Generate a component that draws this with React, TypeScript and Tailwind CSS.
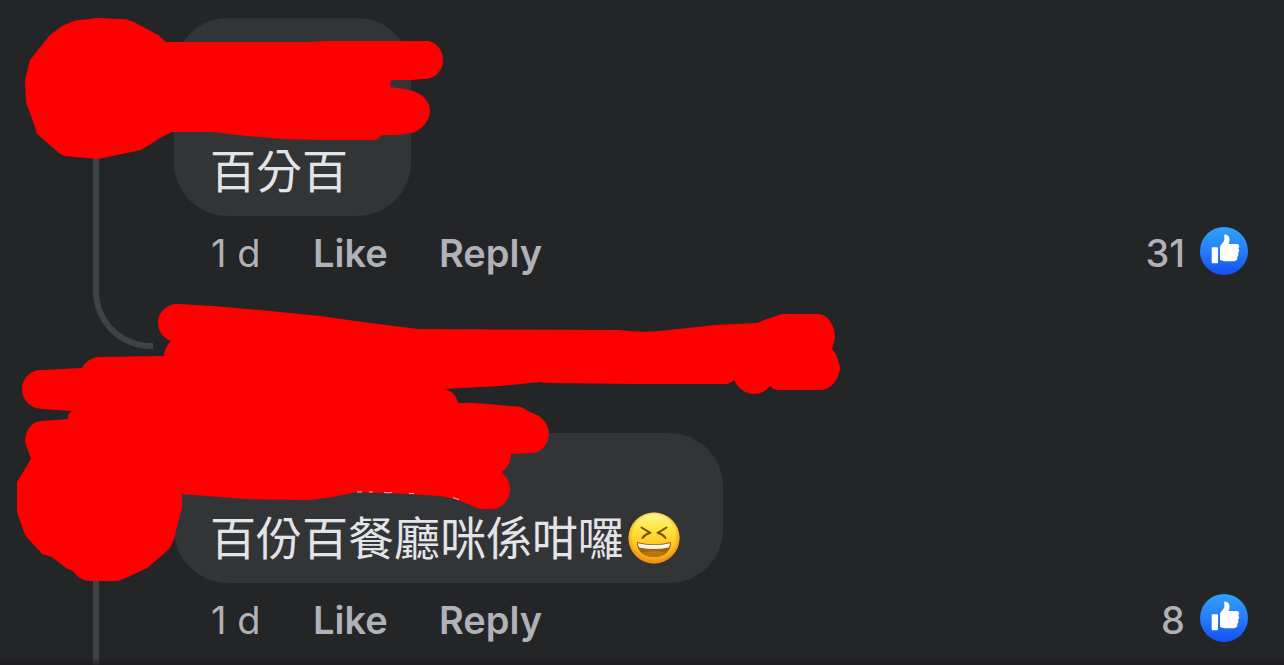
import { useState } from "react";
import type { ReactNode } from "react";

function LikeBadge() {
  return (
    <svg viewBox="0 0 48 48" className="mb-1 size-12" aria-hidden="true">
      <defs>
        <linearGradient id="likeFill" x1="0" y1="0" x2="0" y2="1">
          <stop offset="0" stopColor="#30a2fc" />
          <stop offset="0.5" stopColor="#267dfa" />
          <stop offset="1" stopColor="#1650ef" />
        </linearGradient>
      </defs>
      <circle cx="24" cy="24" r="24" fill="url(#likeFill)" />
      <path
        fill="#fff"
        d="M12.4 20.2h4.8c.5 0 .8.3.8.8v14.4c0 .5-.3.8-.8.8h-4.8c-.4 0-.7-.3-.7-.8V21c0-.5.3-.8.7-.8z"
      />
      <path
        fill="#fff"
        d="M24.200 8.400c-.1-.7.3-1 .9-1 2.800.1 4.400 2.100 4.400 5.200 0 1.700-.3 3.200-.8 4.300h8.100c1.500 0 2.400 1 2.400 2.300 0 1-.4 1.700-1 2.200.6.5.9 1.200.9 2 0 1.100-.5 2-1.200 2.400.4.5.5 1 .5 1.600 0 1.200-.5 2-1.300 2.400.2.4.3.8.3 1.300 0 1.800-1.400 3.100-3.400 3.100H25.200c-2.200 0-3.800-.5-4.600-1.100-.4-.3-.6-.7-.6-1.200V20.800c0-1.400.6-2.300 1.700-3.700 1.500-2 2.700-3.500 2.700-5.200 0-1.200-.1-2.300-.2-3.500z"
      />
    </svg>
  );
}

function LaughingFace() {
  return (
    <svg
      viewBox="0 0 52 52"
      className="mx-1 size-[52px]"
      role="img"
      aria-label="laughing"
    >
      <defs>
        <linearGradient id="faceFill" x1="0" y1="0" x2="0" y2="1">
          <stop offset="0" stopColor="#fff79c" />
          <stop offset="0.3" stopColor="#ffe641" />
          <stop offset="0.7" stopColor="#fdc321" />
          <stop offset="1" stopColor="#f39a12" />
        </linearGradient>
        <radialGradient id="faceEdge" cx="0.5" cy="0.47" r="0.54">
          <stop offset="0.76" stopColor="#f39a12" stopOpacity="0" />
          <stop offset="1" stopColor="#e88208" stopOpacity="0.9" />
        </radialGradient>
      </defs>
      <circle cx="26" cy="26" r="25.500" fill="url(#faceFill)" />
      <circle cx="26" cy="26" r="25.500" fill="url(#faceEdge)" />
      <g
        fill="none"
        stroke="#7d4a05"
        strokeWidth="2"
        strokeLinecap="round"
        strokeLinejoin="round"
      >
        <path d="M13.500 15.500Q18 18.500 22.500 20.800Q17.500 22 14.500 26" />
        <path d="M38.500 15.500Q34 18.500 29.500 20.800Q34.500 22 37.500 26" />
      </g>
      <path
        fill="#a0620b"
        d="M9 30Q26 34.500 43 30C43.500 39 36 45 26 45S8.500 39 9 30z"
      />
      <path
        fill="#b9740f"
        d="M14.500 40.500Q26 37.500 37.500 40.500Q33 45 26 45T14.500 40.500z"
      />
      <path
        fill="#f5f5f3"
        d="M10 31.200Q26 35 42 31.200C42 33 41.500 34.500 40.500 35.500Q26 38.500 11.500 35.500C10.500 34.500 10 33 10 31.200z"
      />
    </svg>
  );
}

// marker strokes that cover the names and avatars
function Redactions() {
  return (
    <svg
      width="860"
      height="600"
      viewBox="0 0 860 600"
      className="pointer-events-none absolute top-0 left-0"
      aria-hidden="true"
    >
      <path
        fill="#ff0000"
        d="M50 35L62 26 75 20.500 100 18 127 19.500 134 22 158 35 166 42 310 42 325 41 428 41C436 42 443 50 443 60C443 71 435 79 424 79L411 80 391 80 390 87 397 88C414 89 430 96 430 111C430 122 419 132 411 133L398 135 382 135C379 138 376 140 372 140L325 140 283 139 237 135 212 132 172 132 160 138 141 150 98 159 64 156 59 153 37 134 34 124 26 102 25 80 30 60z"
      />
      <path
        fill="#ff0000"
        d="M178 304L213 306 260 310 320 316 370 323 418 329 620 330C634 332 646 332 660 331L715 325 757 323 764 320 782 314 817 314C828 314 835 325 835 338L832 349 836 354C838 360 840 366 840 369C838 383 828 390 820 390L780 390C776 390 773 389 770 386C765 392 759 394 755 394C745 394 738 388 734 380C731 383 728 384 725 384L640 384 546 383 540 382 500 386 444 389C452 391 456 395 458 403L475 403 521 407 530 412C543 416 549 425 549 434C548 445 541 453 532 453L511 454C511 462 506 470 501 472C506 476 510 482 510 490C509 501 501 509 492 509L480 509 455 499 440 496 390 493 357 492 333 497 309 500 245 499 182 494 182 508 176 530C174 545 168 551 160 557L147 568 128 577 118 581 90 581C83 581 77 577 73 571L66 568 52 557 42 554 25 535 17 512 17 482 31 459 25 442C25 430 32 421 42 421L68 419C68 416 69 412 72 411L42 409C28 408 22 398 22 389C22 378 31 370 41 370L82 368C85 362 92 357 99 357L164 356C164 350 167 345 171 341C163 338 158 331 158 323C158 312 167 304 178 304z"
      />
      <path
        fill="none"
        stroke="#d9b4b8"
        d="M357 492h5M369 492h4M384 492.500q4 .8 8 0M409 493.500h5M453 497.500q3 1.500 6 2"
      />
    </svg>
  );
}

function CommentActions({ age, likes }: { age: string; likes: number }) {
  const [liked, setLiked] = useState(false);

  return (
    <div className="flex h-[74px] items-center pr-9 pl-[37px] text-[38px] text-[#b0b1b9]">
      <span className="w-[102px]">{age}</span>
      <button
        type="button"
        aria-pressed={liked}
        onClick={() => setLiked(!liked)}
        className="w-[126px] text-left font-semibold"
      >
        Like
      </button>
      <button type="button" className="font-semibold">
        Reply
      </button>
      <div className="ml-auto flex items-center gap-[15px]">
        <span className="font-medium">{likes}</span>
        <LikeBadge />
      </div>
    </div>
  );
}

function Bubble({ size, children }: { size: string; children: ReactNode }) {
  return (
    <div
      className={`flex w-fit items-end rounded-[54px] bg-[#333436] pr-[39px] pb-[15px] pl-9 ${size}`}
    >
      <p className="flex h-[60px] items-center text-[46px] leading-[60px] text-[#e3e4ea]">
        {children}
      </p>
    </div>
  );
}

function App() {
  return (
    <main className="relative flex min-h-screen flex-col bg-[#242527] pt-[18px] font-[Inter,'Noto_Sans_CJK_TC',sans-serif]">
      <article className="mb-[84px] flex">
        <div className="flex w-[174px] shrink-0 pl-[93px]">
          <div className="w-[60px] rounded-bl-[58px] border-b-6 border-l-6 border-[#414244]" />
        </div>
        <div className="flex-1 pb-[59px]">
          <Bubble size="min-h-[198px] min-w-[237px]">百分百</Bubble>
          <CommentActions age="1 d" likes={31} />
        </div>
      </article>

      <article className="flex flex-1">
        <div className="flex w-[174px] shrink-0 pl-[93px]">
          <div className="w-[6px] bg-[#414244]" />
        </div>
        <div className="flex-1">
          <Bubble size="min-h-[150px]">
            百份百餐廳咪係咁囉
            <LaughingFace />
          </Bubble>
          <CommentActions age="1 d" likes={8} />
        </div>
      </article>

      <Redactions />
      <div className="pointer-events-none absolute inset-x-0 bottom-0 h-2 bg-linear-to-b from-transparent to-[#1a181a]/70" />
    </main>
  );
}

export default App;
